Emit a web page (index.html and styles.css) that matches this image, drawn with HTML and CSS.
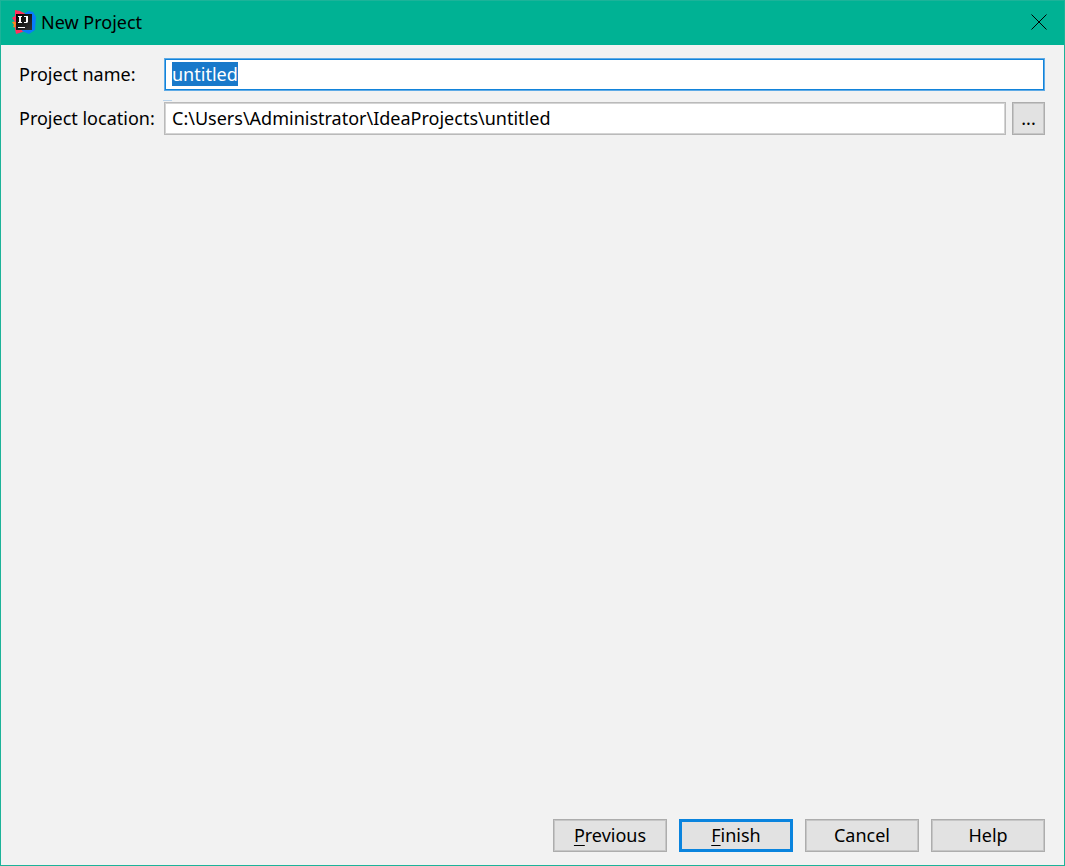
FILE: index.html
```html
<!DOCTYPE html>
<html lang="en">

<head>
  <meta charset="UTF-8">
  <meta name="viewport" content="width=device-width, initial-scale=1.0">
  <title>New Project</title>
  <link rel="stylesheet" href="styles.css">
</head>

<body>
  <div class="dialog">
    <header class="titlebar">
      <svg class="logo" viewBox="0 0 24 24" aria-hidden="true">
        <defs>
          <linearGradient id="plate" x1="0" y1="0" x2="1" y2="1">
            <stop offset="0" stop-color="#000"/>
            <stop offset="1" stop-color="#333"/>
          </linearGradient>
        </defs>
        <path fill="#f98a1c" d="M0 12l5-1v7l-4-1 1-2z"/>
        <path fill="#fe315d" d="M3 0l5 1 6 3-3 13 3 4-10 3-1-5 1-6-4-5 3-2z"/>
        <path fill="#087cfa" d="M13 3l4-2 4 1 3 5-1 13-6 4-7-3z"/>
        <path fill="url(#plate)" d="M4 4h16v16H4z"/>
        <path fill="#fff" d="M6 6h4v1H9v5h1v1H6v-1h1V7H6zM12 6h4v6l-1 1h-3v-1h2V7h-2zM6 17h7v1H6z"/>
      </svg>
      <h1>New Project</h1>
      <button type="button" class="close" aria-label="Close">
        <svg viewBox="0 0 16 16" aria-hidden="true">
          <path d="M0.5 0.5l15 15M15.5 0.5l-15 15" stroke="#000" fill="none"/>
        </svg>
      </button>
    </header>

    <form class="content">
      <div class="fields">
        <label for="projectName">Project name:</label>
        <input type="text" id="projectName" class="name" value="untitled" spellcheck="false">

        <label for="projectLocation">Project location:</label>
        <div class="location">
          <input type="text" id="projectLocation" value="C:\Users\Administrator\IdeaProjects\untitled" spellcheck="false">
          <button type="button" class="browse">...</button>
        </div>
      </div>

      <div class="buttons">
        <button type="button"><u>P</u>revious</button>
        <button type="submit" class="default"><u>F</u>inish</button>
        <button type="button">Cancel</button>
        <button type="button">Help</button>
      </div>
    </form>
  </div>

  <script>
    const projectName = document.getElementById("projectName");
    projectName.focus();
    projectName.select();
  </script>
</body>

</html>
```

FILE: styles.css
```css
* {
  box-sizing: border-box;
}

body {
  margin: 0;
  background-color: #f2f2f2;
}

body, input, button {
  font-family: "Noto Sans", "Open Sans", sans-serif;
  font-size: 18px;
  line-height: 26px;
  color: #000;
}

.dialog {
  display: flex;
  flex-direction: column;
  min-height: 100vh;
  border: 1px solid #1cb399;
}

.titlebar {
  display: flex;
  align-items: center;
  gap: 5px;
  height: 44px;
  padding: 0 17px 2px 11px;
  background-color: #00b294;
}

.logo {
  width: 24px;
  height: 24px;
}

.titlebar h1 {
  flex: 1;
  margin: 0;
  font-size: 18px;
  font-weight: normal;
}

.close {
  display: flex;
  padding: 0;
  border: none;
  background: none;
}

.close svg {
  width: 16px;
  height: 16px;
}

.content {
  display: flex;
  flex: 1;
  flex-direction: column;
  justify-content: space-between;
  padding: 13px 19px 13px 18px;
}

.fields {
  display: grid;
  grid-template-columns: 138px 1fr;
  gap: 11px 7px;
  align-items: center;
}

.fields label {
  padding-bottom: 2px;
  white-space: nowrap;
}

.location {
  position: relative;
  display: flex;
  gap: 6px;
}

/* thin line between the two fields */
.location::before {
  content: "";
  position: absolute;
  top: -2px;
  left: -1px;
  width: 9px;
  height: 1px;
  background-color: #b9d3ea;
}

input {
  width: 100%;
  min-width: 0;
  height: 33px;
  padding: 0 7px 2px;
  border: 1px solid #bababa;
  box-shadow: inset 0 0 0 1px #d4d4d4;
  background-color: #fff;
  outline: none;
}

.name {
  border-color: #5fabe6;
  box-shadow: inset 0 0 0 1px #1283da;
}

input::selection {
  background-color: #1979ca;
  color: #fff;
}

.browse, .buttons button {
  height: 33px;
  padding: 0 0 2px;
  border: 1px solid #adadad;
  box-shadow: inset 0 0 0 1px #c6c6c6;
  background-color: #e2e2e2;
}

.browse {
  flex: none;
  width: 33px;
}

.buttons {
  display: flex;
  justify-content: flex-end;
  gap: 12px;
}

.buttons button {
  width: 114px;
}

.buttons .default {
  border: 3px solid #0a84de;
  box-shadow: none;
}

.buttons u {
  text-underline-offset: 3px;
}
```
